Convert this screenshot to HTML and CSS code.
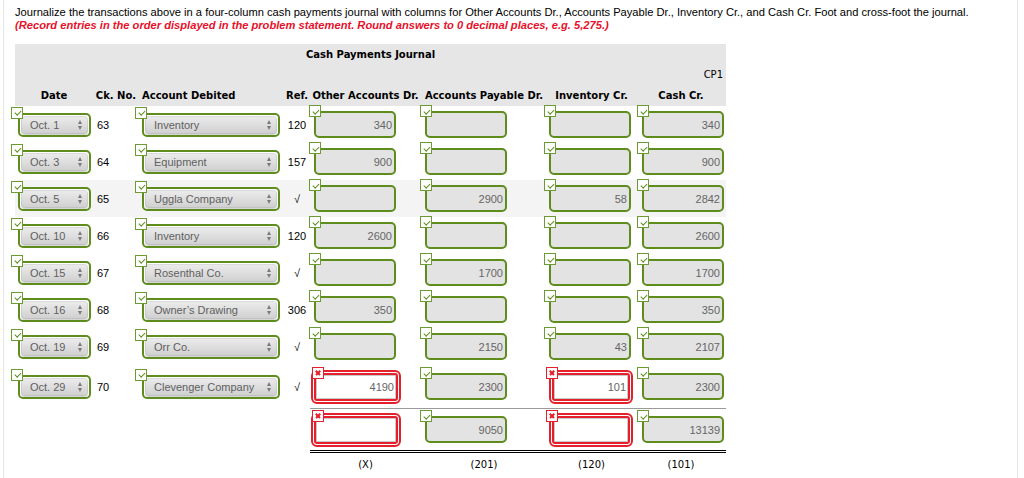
FILE: index.html
```html
<!DOCTYPE html>
<html>
<head>
<meta charset="utf-8">
<title>Cash Payments Journal</title>
<link rel="stylesheet" href="styles.css">
</head>
<body>
<div class="page">
  <div class="intro">
    <p>Journalize the transactions above in a four-column cash payments journal with columns for Other Accounts Dr., Accounts Payable Dr., Inventory Cr., and Cash Cr. Foot and cross-foot the journal.</p>
    <p class="warn">(Record entries in the order displayed in the problem statement. Round answers to 0 decimal places, e.g. 5,275.)</p>
  </div>
  <table class="journal">
    <colgroup>
      <col class="w1"><col class="w2"><col class="w3"><col class="w4"><col class="w5"><col class="w6"><col class="w7"><col class="w8">
    </colgroup>
    <thead>
      <tr class="t1"><th colspan="8">Cash Payments Journal</th></tr>
      <tr class="t2"><th colspan="8">CP1</th></tr>
      <tr class="t3"><th>Date</th><th>Ck. No.</th><th class="left">Account Debited</th><th>Ref.</th><th>Other Accounts Dr.</th><th>Accounts Payable Dr.</th><th>Inventory Cr.</th><th>Cash Cr.</th></tr>
    </thead>
    <tbody>
      <tr>
        <td><div class="sel sd"><i class="ok"></i><div class="pill"><span>Oct. 1</span><b class="arr"></b></div></div></td>
        <td>63</td>
        <td><div class="sel sa"><i class="ok"></i><div class="pill"><span>Inventory</span><b class="arr"></b></div></div></td>
        <td>120</td>
        <td><div class="fld"><i class="ok"></i>340</div></td>
        <td><div class="fld"><i class="ok"></i></div></td>
        <td><div class="fld"><i class="ok"></i></div></td>
        <td><div class="fld"><i class="ok"></i>340</div></td>
      </tr>
      <tr>
        <td><div class="sel sd"><i class="ok"></i><div class="pill"><span>Oct. 3</span><b class="arr"></b></div></div></td>
        <td>64</td>
        <td><div class="sel sa"><i class="ok"></i><div class="pill"><span>Equipment</span><b class="arr"></b></div></div></td>
        <td>157</td>
        <td><div class="fld"><i class="ok"></i>900</div></td>
        <td><div class="fld"><i class="ok"></i></div></td>
        <td><div class="fld"><i class="ok"></i></div></td>
        <td><div class="fld"><i class="ok"></i>900</div></td>
      </tr>
      <tr class="hl">
        <td><div class="sel sd"><i class="ok"></i><div class="pill"><span>Oct. 5</span><b class="arr"></b></div></div></td>
        <td>65</td>
        <td><div class="sel sa"><i class="ok"></i><div class="pill"><span>Uggla Company</span><b class="arr"></b></div></div></td>
        <td>√</td>
        <td><div class="fld"><i class="ok"></i></div></td>
        <td><div class="fld"><i class="ok"></i>2900</div></td>
        <td><div class="fld"><i class="ok"></i>58</div></td>
        <td><div class="fld"><i class="ok"></i>2842</div></td>
      </tr>
      <tr>
        <td><div class="sel sd"><i class="ok"></i><div class="pill"><span>Oct. 10</span><b class="arr"></b></div></div></td>
        <td>66</td>
        <td><div class="sel sa"><i class="ok"></i><div class="pill"><span>Inventory</span><b class="arr"></b></div></div></td>
        <td>120</td>
        <td><div class="fld"><i class="ok"></i>2600</div></td>
        <td><div class="fld"><i class="ok"></i></div></td>
        <td><div class="fld"><i class="ok"></i></div></td>
        <td><div class="fld"><i class="ok"></i>2600</div></td>
      </tr>
      <tr>
        <td><div class="sel sd"><i class="ok"></i><div class="pill"><span>Oct. 15</span><b class="arr"></b></div></div></td>
        <td>67</td>
        <td><div class="sel sa"><i class="ok"></i><div class="pill"><span>Rosenthal Co.</span><b class="arr"></b></div></div></td>
        <td>√</td>
        <td><div class="fld"><i class="ok"></i></div></td>
        <td><div class="fld"><i class="ok"></i>1700</div></td>
        <td><div class="fld"><i class="ok"></i></div></td>
        <td><div class="fld"><i class="ok"></i>1700</div></td>
      </tr>
      <tr>
        <td><div class="sel sd"><i class="ok"></i><div class="pill"><span>Oct. 16</span><b class="arr"></b></div></div></td>
        <td>68</td>
        <td><div class="sel sa"><i class="ok"></i><div class="pill"><span>Owner’s Drawing</span><b class="arr"></b></div></div></td>
        <td>306</td>
        <td><div class="fld"><i class="ok"></i>350</div></td>
        <td><div class="fld"><i class="ok"></i></div></td>
        <td><div class="fld"><i class="ok"></i></div></td>
        <td><div class="fld"><i class="ok"></i>350</div></td>
      </tr>
      <tr>
        <td><div class="sel sd"><i class="ok"></i><div class="pill"><span>Oct. 19</span><b class="arr"></b></div></div></td>
        <td>69</td>
        <td><div class="sel sa"><i class="ok"></i><div class="pill"><span>Orr Co.</span><b class="arr"></b></div></div></td>
        <td>√</td>
        <td><div class="fld"><i class="ok"></i></div></td>
        <td><div class="fld"><i class="ok"></i>2150</div></td>
        <td><div class="fld"><i class="ok"></i>43</div></td>
        <td><div class="fld"><i class="ok"></i>2107</div></td>
      </tr>
      <tr class="tall">
        <td><div class="sel sd"><i class="ok"></i><div class="pill"><span>Oct. 29</span><b class="arr"></b></div></div></td>
        <td>70</td>
        <td><div class="sel sa"><i class="ok"></i><div class="pill"><span>Clevenger Company</span><b class="arr"></b></div></div></td>
        <td>√</td>
        <td><div class="fld bad"><i class="x"></i>4190</div></td>
        <td><div class="fld"><i class="ok"></i>2300</div></td>
        <td><div class="fld bad"><i class="x"></i>101</div></td>
        <td><div class="fld"><i class="ok"></i>2300</div></td>
      </tr>
      <tr class="sep"><td></td><td></td><td></td><td></td><td></td><td></td><td></td><td></td></tr>
      <tr class="tot">
        <td></td><td></td><td></td><td></td>
        <td><div class="fld bad"><i class="x"></i></div></td>
        <td><div class="fld"><i class="ok"></i>9050</div></td>
        <td><div class="fld bad"><i class="x"></i></div></td>
        <td><div class="fld"><i class="ok"></i>13139</div></td>
      </tr>
      <tr class="dbl"><td></td><td></td><td></td><td></td><td></td><td></td><td></td><td></td></tr>
      <tr class="lbl">
        <td></td><td></td><td></td><td></td>
        <td>(X)</td><td>(201)</td><td>(120)</td><td>(101)</td>
      </tr>
    </tbody>
  </table>
</div>
</body>
</html>
```

FILE: styles.css
```css
html, body {
  margin: 0;
  padding: 0;
  background: #fff;
}
body {
  font-family: "Liberation Sans", Arial, sans-serif;
  font-size: 11px;
  color: #000;
}
.page {
  margin-left: 3px;
  width: 1015px;
  min-height: 478px;
  box-sizing: border-box;
  border-left: 1px solid #e3e8ef;
  border-right: 1px solid #e3e8ef;
  padding: 6px 0 0 11px;
}
.intro p {
  margin: 0;
  font-size: 11.15px;
  line-height: 12.5px;
  white-space: nowrap;
}
.intro .warn {
  color: #e8102a;
  font-weight: bold;
  font-style: italic;
}

/* table */
.journal {
  margin-top: 13px;
  width: 711px;
  table-layout: fixed;
  border-collapse: separate;
  border-spacing: 0;
}
.w1 { width: 78px; }
.w2 { width: 46px; }
.w3 { width: 145px; }
.w4 { width: 26px; }
.w5 { width: 111px; }
.w6 { width: 126px; }
.w7 { width: 89px; }
.w8 { width: 90px; }

.journal th {
  padding: 0;
  background: #e6e6e6;
  font-family: "DejaVu Sans", Verdana, sans-serif;
  font-size: 10px;
  font-weight: bold;
  text-align: center;
  white-space: nowrap;
  vertical-align: middle;
}
.t1 th { height: 20px; }
.t2 th {
  height: 20px;
  font-weight: normal;
  text-align: right;
  padding-right: 3px;
}
.t3 th { height: 22px; }
.t3 th.left { text-align: left; text-indent: 3px; }

.journal td {
  padding: 0;
  height: 37px;
  vertical-align: middle;
  white-space: nowrap;
}
.journal tr.hl td { background: #f4f4f4; }
.journal tr.tall td { height: 43px; }
.journal td:nth-child(2) { text-indent: 4px; }
.journal td:nth-child(4) { text-align: center; }
.journal td:nth-child(1) .sel,
.journal td:nth-child(3) .sel { margin-left: 3px; }
.journal td:nth-child(5) .fld { margin-left: 4px; }
.journal td:nth-child(6) .fld { margin-left: 4px; }
.journal td:nth-child(7) .fld { margin-left: 2px; }
.journal td:nth-child(8) .fld { margin-left: 6px; }
.journal td:nth-child(5) .fld.bad { margin-left: 1px; width: 90px; }
.journal td:nth-child(7) .fld.bad { margin-left: 2px; width: 84px; }

/* separator rows */
.journal tr.sep td {
  height: 1px;
  font-size: 0;
  line-height: 0;
}
.journal tr.sep td:nth-child(n+5) { background: #9a9a9a; }
.journal tr.tot td { height: 41px; }
.journal tr.dbl td {
  height: 3px;
  font-size: 0;
  line-height: 0;
}
.journal tr.dbl td:nth-child(n+5) {
  background: linear-gradient(#000 0, #000 1px, #fff 1px, #fff 2px, #000 2px, #000 3px);
}
.journal tr.lbl td {
  height: 22px;
  text-align: center;
  text-indent: 0;
  font-family: "DejaVu Sans", Verdana, sans-serif;
  font-size: 10px;
}

/* select controls */
.sel {
  position: relative;
  height: 24px;
  box-sizing: border-box;
  border: 2px solid #5e8d1e;
  border-radius: 5px;
  padding: 1px;
  background: #fff;
}
.sd { width: 73px; }
.sa { width: 138px; }
.pill {
  height: 18px;
  border-radius: 4px;
  background: linear-gradient(#ececec 0%, #dedede 50%, #cfcfcf 100%);
  box-shadow: inset 0 0 0 1px rgba(0, 0, 0, 0.07), 0 1px 1px rgba(0, 0, 0, 0.18);
  display: flex;
  align-items: center;
  justify-content: space-between;
  padding: 0 6px 0 9px;
  color: #5f5f5f;
  font-size: 11px;
}
.arr {
  display: flex;
  flex-direction: column;
  gap: 2px;
}
.arr::before,
.arr::after {
  content: "";
  width: 0;
  height: 0;
  border-left: 2.5px solid transparent;
  border-right: 2.5px solid transparent;
}
.arr::before { border-bottom: 4px solid #7a7a7a; }
.arr::after { border-top: 4px solid #7a7a7a; }

/* input fields */
.fld {
  position: relative;
  width: 82px;
  height: 27px;
  box-sizing: border-box;
  border: 2px solid #5e8d1e;
  border-radius: 5px;
  background: #e3e3e3;
  display: flex;
  align-items: center;
  justify-content: flex-end;
  padding-right: 2px;
  color: #666;
  font-size: 11px;
}
.fld.bad {
  height: 34px;
  border: 5px double #e3202b;
  border-radius: 6px;
  background: #fff;
  box-shadow: inset 0 0 0 1px #cacaca;
}

/* status icons */
.ok, .x {
  position: absolute;
  width: 12px;
  height: 12px;
  box-sizing: border-box;
  background: #fff;
}
.ok {
  left: -7px;
  top: -8px;
  border: 1px solid #6c9b33;
}
.sel .ok { left: -9px; top: -8px; }
.ok::after {
  content: "";
  position: absolute;
  left: 3.5px;
  top: 1.5px;
  width: 2.5px;
  height: 5px;
  border: solid #5e8d1e;
  border-width: 0 1.3px 1.3px 0;
  transform: rotate(45deg);
}
.x {
  left: -4px;
  top: -8px;
  border: 1px solid #e3202b;
}
.journal td:nth-child(7) .x { left: -8px; }
.x::before,
.x::after {
  content: "";
  position: absolute;
  left: 2px;
  top: 4.2px;
  width: 6px;
  height: 1.6px;
  background: #e3202b;
  transform: rotate(45deg);
}
.x::after { transform: rotate(-45deg); }
```
